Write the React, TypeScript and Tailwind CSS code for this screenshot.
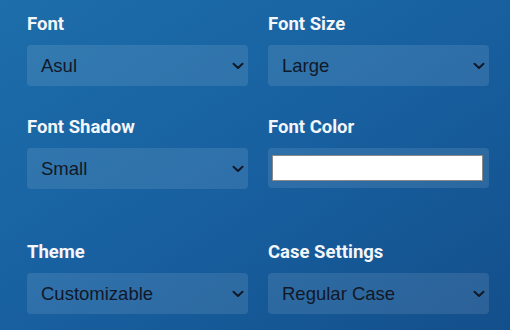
import React from "react";

function Chevron() {
  return (
    <svg width="12" height="8" viewBox="0 0 12 8" className="absolute right-[4px] top-1/2 -translate-y-1/2">
      <path d="M1.5 1.8 L6 6 L10.5 1.8" fill="none" stroke="#111827" strokeWidth="2" strokeLinecap="round" strokeLinejoin="round" />
    </svg>
  );
}

function Select({ value }: { value: string }) {
  return (
    <div className="relative flex h-[41px] items-center rounded-[4px] bg-white/10 pl-[14px] text-[18.5px] text-[#111827]" style={{ fontFamily: '"Liberation Sans", Arial, sans-serif' }}>
      <span>{value}</span>
      <Chevron />
    </div>
  );
}

function Label({ children }: { children: React.ReactNode }) {
  return (
    <div className="mb-[11px] text-[18.5px] leading-[20px] font-bold text-[#f3f6fa]" style={{ fontFamily: 'Roboto, "Liberation Sans", sans-serif' }}>
      {children}
    </div>
  );
}

export default function App() {
  return (
    <div className="h-[330px] w-[510px] overflow-hidden bg-gradient-to-br from-[#1d6eaa] via-[#1860a0] to-[#134f8b]">
      <div className="grid grid-cols-[221px_221px] gap-x-[20px] pl-[27px] pt-[14px]">
        <div>
          <Label>Font</Label>
          <Select value="Asul" />
        </div>
        <div>
          <Label>Font Size</Label>
          <Select value="Large" />
        </div>
        <div className="mt-[31px]">
          <Label>Font Shadow</Label>
          <Select value="Small" />
        </div>
        <div className="mt-[31px]">
          <Label>Font Color</Label>
          <div className="h-[40px] rounded-[4px] bg-white/10 pb-[7px] pl-[4px] pr-[6px] pt-[7px]">
            <div className="h-full w-full border border-[#8a8a8a] bg-white" />
          </div>
        </div>
        <div className="mt-[53px]">
          <Label>Theme</Label>
          <Select value="Customizable" />
        </div>
        <div className="mt-[53px]">
          <Label>Case Settings</Label>
          <Select value="Regular Case" />
        </div>
      </div>
    </div>
  );
}
